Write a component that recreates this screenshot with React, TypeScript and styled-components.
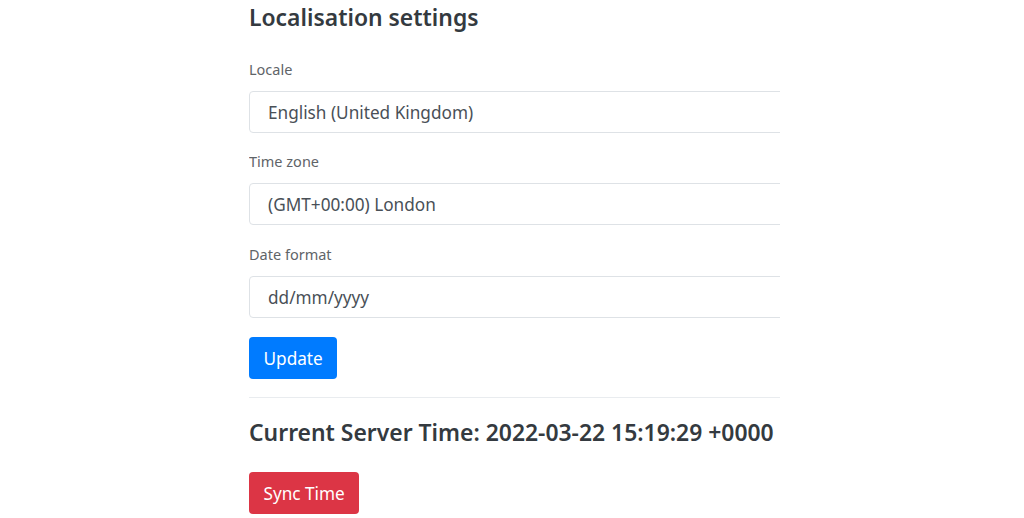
import React from 'react';
import styled, { createGlobalStyle } from 'styled-components';

const Global = createGlobalStyle`
  body {
    margin: 0;
    background: #fff;
    font-family: "Noto Sans", "Open Sans", sans-serif;
    color: #343a40;
  }
`;

const Page = styled.div`
  width: 1024px;
  height: 518px;
  overflow: hidden;
  display: flex;
  justify-content: flex-start;
  padding-left: 249px;
  box-sizing: border-box;
`;

const Panel = styled.section`
  width: 531px;
  overflow: hidden;
  display: flex;
  flex-direction: column;
`;

const Heading = styled.h2`
  margin: ${(p: { $top: number }) => p.$top}px 0 0;
  font-size: 22.9px;
  font-weight: 600;
  line-height: 28px;
  color: #343a40;
  white-space: nowrap;
`;

const Field = styled.div`
  display: flex;
  flex-direction: column;
  margin-top: ${(p: { $top: number }) => p.$top}px;
`;

const Label = styled.label`
  font-size: 14.5px;
  line-height: 20px;
  color: #5f6468;
  margin-bottom: 12px;
`;

const Input = styled.div`
  width: 560px;
  height: 42px;
  box-sizing: border-box;
  border: 1px solid #dee2e6;
  border-radius: 4px;
  padding: 0 18px;
  display: flex;
  align-items: center;
  font-size: 17.2px;
  color: #495057;
`;

const Button = styled.button<{ $tone: 'blue' | 'red'; $top: number }>`
  align-self: flex-start;
  margin-top: ${(p) => p.$top}px;
  height: 42px;
  padding: 0 14.5px;
  border: none;
  border-radius: 4px;
  font-family: inherit;
  font-size: 17.2px;
  color: #fff;
  background: ${(p) => (p.$tone === 'blue' ? '#007bff' : '#dc3545')};
`;

const Rule = styled.hr`
  margin: 18px 0 0;
  border: none;
  border-top: 1px solid #e9ecef;
  width: 100%;
`;

const fields = [
  { label: 'Locale', value: 'English (United Kingdom)', top: 27 },
  { label: 'Time zone', value: '(GMT+00:00) London', top: 18 },
  { label: 'Date format', value: 'dd/mm/yyyy', top: 19 },
];

export default function App() {
  return (
    <Page>
      <Global />
      <Panel>
        <Heading $top={4}>Localisation settings</Heading>
        {fields.map((f) => (
          <Field key={f.label} $top={f.top}>
            <Label>{f.label}</Label>
            <Input>{f.value}</Input>
          </Field>
        ))}
        <Button $tone="blue" $top={19}>Update</Button>
        <Rule />
        <Heading $top={21}>Current Server Time: 2022-03-22 15:19:29 +0000</Heading>
        <Button $tone="red" $top={25}>Sync Time</Button>
      </Panel>
    </Page>
  );
}
